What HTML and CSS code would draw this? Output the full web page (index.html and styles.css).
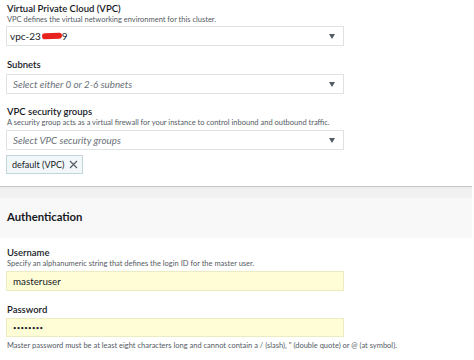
FILE: index.html
```html
<!DOCTYPE html>
<html>
<head>
<meta charset="utf-8">
<link rel="stylesheet" href="styles.css">
</head>
<body>
<div class="card top">
  <div class="field first">
    <div class="label">Virtual Private Cloud (VPC)</div>
    <div class="desc">VPC defines the virtual networking environment for this cluster.</div>
    <div class="select"><span class="value">vpc-23<span class="redact"></span>9</span><span class="caret"></span></div>
  </div>
  <div class="field second">
    <div class="label">Subnets</div>
    <div class="select nodesc"><span class="placeholder">Select either 0 or 2-6 subnets</span><span class="caret"></span></div>
  </div>
  <div class="field third">
    <div class="label">VPC security groups</div>
    <div class="desc">A security group acts as a virtual firewall for your instance to control inbound and outbound traffic.</div>
    <div class="select"><span class="placeholder">Select VPC security groups</span><span class="caret"></span></div>
    <div class="token">default (VPC)<svg class="x" width="9" height="9" viewBox="0 0 9 9"><path d="M1 1L8 8M8 1L1 8" stroke="#545b64" stroke-width="1.2" fill="none"/></svg></div>
  </div>
</div>
<div class="header"><h2>Authentication</h2></div>
<div class="card bottom">
  <div class="field first">
    <div class="label">Username</div>
    <div class="desc">Specify an alphanumeric string that defines the login ID for the master user.</div>
    <div class="input">masteruser</div>
  </div>
  <div class="field pw">
    <div class="label">Password</div>
    <div class="input nodesc dots">••••••••</div>
    <div class="help">Master password must be at least eight characters long and cannot contain a / (slash), " (double quote) or @ (at symbol).</div>
  </div>
</div>
</body>
</html>
```
FILE: styles.css
```css
html, body { margin: 0; padding: 0; background: #fff; }
body { font-family: Lato, "Open Sans", sans-serif; color: #16191f; width: 474px; height: 360px; overflow: hidden; }
.card { background: #fff; padding: 0 0 0 6px; width: 466px; }
.top { padding-bottom: 12px; border-bottom: 1px solid #c8c8c8; }
.field { margin-top: 12px; }
.field.first { margin-top: 3px; }
.field.second { margin-top: 13px; }
.label { font-size: 9.5px; line-height: 12px; font-weight: 600; padding-left: 1px; color: #16191f; }
.desc, .help { font-size: 7.5px; line-height: 10px; color: #545b64; padding-left: 1px; }
.select { box-sizing: border-box; width: 338px; height: 20px; margin-top: 1px; border: 1px solid #dfe3e4; display: flex; align-items: center; justify-content: space-between; padding: 0 8px 0 3px; font-size: 10px; }
.select.nodesc { margin-top: 3px; }
.third .select { margin-top: 2px; }
.value { color: #16191f; display: flex; align-items: center; }
.redact { display: inline-block; width: 20px; height: 6px; background: #e8231f; border-radius: 3px; margin-left: 1px; transform: rotate(-3deg); }
.placeholder { font-style: italic; color: #687078; padding-left: 3px; font-size: 9.8px; }
.caret { width: 0; height: 0; border-left: 3.5px solid transparent; border-right: 3.5px solid transparent; border-top: 5px solid #545b64; }
.token { box-sizing: border-box; display: inline-flex; align-items: center; gap: 5px; height: 19px; margin-top: 5px; padding: 0 4px 0 5px; border: 1px solid #c2d6d9; background: #f2f8fa; font-size: 9px; color: #16191f; }
.header { background: #f8f8f8; border-top: 2px solid #ededed; height: 49px; box-shadow: inset 0 9px 0 #f1f1f1; width: 472px; }
.header h2 { margin: 0; padding: 21px 0 0 7px; font-size: 11.3px; line-height: 14px; font-weight: 700; color: #16191f; }
.bottom .field.first { margin-top: 9px; }
.field.pw { margin-top: 13px; }
.input { box-sizing: border-box; width: 338px; height: 20px; margin-top: 2px; background: #fefdd6; border: 1px solid #ececc2; display: flex; align-items: center; padding-left: 6px; font-size: 9.8px; color: #16191f; }
.input.dots { height: 19px; font-size: 6px; letter-spacing: 0.3px; }
.help { margin-top: 4px; }
```
